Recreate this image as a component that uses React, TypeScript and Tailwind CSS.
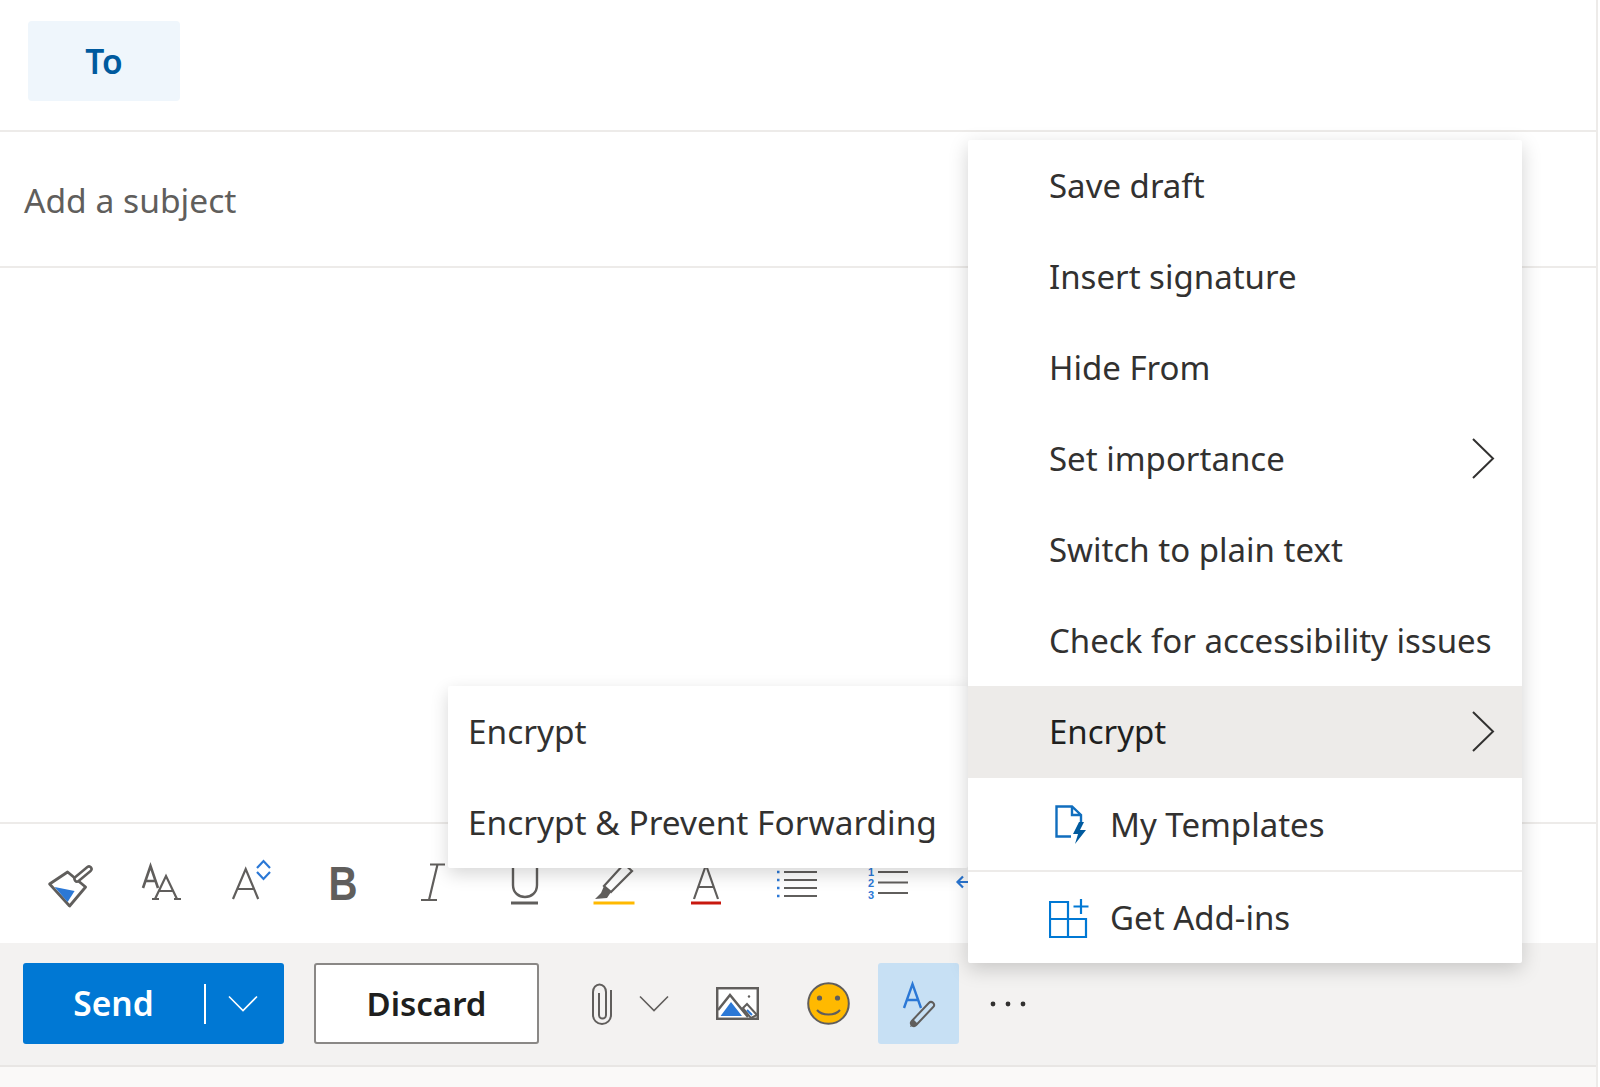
const G = "#605e5c";
const B = "#2b78d6";

function Cell({ children }: { children: React.ReactNode }) {
  return <div className="flex w-[90.7px] shrink-0 justify-center">{children}</div>;
}
function Ic({ children }: { children: React.ReactNode }) {
  return <svg width="48" height="48" viewBox="0 0 48 48" fill="none" stroke={G} strokeWidth="2.2" className="overflow-visible">{children}</svg>;
}
function Chevron({ className }: { className?: string }) {
  return (
    <svg width="30" height="17" viewBox="0 0 30 17" fill="none" className={className} stroke="currentColor" strokeWidth="1.6">
      <path d="M1 1.5 L15 15.5 L29 1.5" />
    </svg>
  );
}
function ChevronRight() {
  return (
    <svg width="23" height="41" viewBox="0 0 23 41" fill="none" stroke="#323130" strokeWidth="2" className="absolute left-[504px] top-[25px]">
      <path d="M1 1 L21 20.5 L1 40" />
    </svg>
  );
}
function Item({ label, chevron, active }: { label: string; chevron?: boolean; active?: boolean }) {
  return active ? (
    <div className="relative flex h-[92px] items-center bg-[#edebe9] pb-px pl-[81px] text-[#201f1e]">
      {label}
      <ChevronRight />
    </div>
  ) : (
    <div className="relative flex h-[91px] items-center pl-[81px]">
      {label}
      {chevron && <ChevronRight />}
    </div>
  );
}

export default function App() {
  return (
    <div className="relative h-[1087px] w-[1600px] overflow-hidden bg-white font-['Noto_Sans',sans-serif] text-[#323130]">
      <div className="flex h-[1087px] w-[1598px] flex-col border-r-2 border-[#edebe9]">
        <div className="h-[132px] shrink-0 border-b-2 border-[#edebe9] pl-[28px] pt-[21px]">
          <div className="flex h-[80px] w-[152px] items-center justify-center rounded-[4px] bg-[#eff6fc] text-[33.5px] font-semibold text-[#005a9e]">
            To
          </div>
        </div>
        <div className="flex h-[136px] shrink-0 items-center border-b-2 border-[#edebe9] pl-[24px] pt-[3px] text-[33.6px] text-[#605e5c]">
          Add a subject
        </div>
        <div className="h-[556px] shrink-0 border-b-2 border-[#edebe9]" />
        <div className="flex h-[119px] shrink-0 pl-[26px] pt-[35px]">
          <Cell>
            <Ic>
              <path d="M2.6 25 L20.6 13 L38.6 28 L22.6 47 Z" fill="white" strokeWidth="2.8" strokeLinejoin="round" />
              <path d="M7.6 28 L27.6 32 L20.6 43 Z" fill={B} stroke="none" />
              <path d="M30 20 L42 10" strokeWidth="7.5" strokeLinecap="round" />
              <path d="M30 20 L42 10" strokeWidth="2.5" stroke="white" strokeLinecap="round" />
            </Ic>
          </Cell>
          <Cell>
            <Ic>
              <path d="M5 29 L12.5 7 L20 29 M7.5 22 H17.5" strokeWidth="2.6" />
              <path d="M17 40 L28 17 L39 40 M21 32 H35 M14 40 H21 M36 40 H43" />
            </Ic>
          </Cell>
          <Cell>
            <Ic>
              <path d="M4 40 L16.7 10 L29.2 40 M8.5 30 H25" />
              <path d="M28 9 L34.5 2 L41 9 M28 13 L34.5 20 L41 13" stroke={B} />
            </Ic>
          </Cell>
          <Cell>
            <Ic>
              <text x="24" y="41" textAnchor="middle" transform="translate(4.3 0) scale(0.82 1)" fontFamily="'Liberation Sans', sans-serif" fontWeight="700" fontSize="49" fill={G} stroke="none">
                B
              </text>
            </Ic>
          </Cell>
          <Cell>
            <Ic>
              <path d="M20 5.5 H35 M27.5 5.5 L19 41 M11 41 H27" />
            </Ic>
          </Cell>
          <Cell>
            <Ic>
              <path d="M12 4 V26 C12 42 36 42 36 26 V4" strokeWidth="2.4" />
              <path d="M10 44 H37" strokeWidth="3" />
            </Ic>
          </Cell>
          <Cell>
            <Ic>
              <path d="M2.5 44 H43.5" stroke="#ffb900" strokeWidth="3" />
              <path d="M13 27 L33 5 L41 12 L20 33 Z" fill="white" />
              <path d="M13 27 L20 33 L16 39 L4 40 L10 34 Z" fill={G} stroke="none" />
            </Ic>
          </Cell>
          <Cell>
            <Ic>
              <path d="M12 40 L24 6 L36 40 M15.5 28 H32.5" />
              <path d="M9 44 H39" stroke="#c8180f" strokeWidth="3" />
            </Ic>
          </Cell>
          <Cell>
            <Ic>
              <path d="M11 13 H44 M11 21 H44 M11 29 H44 M11 37 H44" />
              <path d="M4 13 H6.5 M4 21 H6.5 M4 29 H6.5 M4 37 H6.5" stroke={B} strokeWidth="2.4" />
            </Ic>
          </Cell>
          <Cell>
            <Ic>
              <path d="M14 13 H44 M14 23.5 H44 M14 34 H44" />
              <g fontFamily="'Liberation Sans', sans-serif" fontSize="11" fontWeight="700" fill={B} stroke="none" textAnchor="middle">
                <text x="7" y="17">1</text>
                <text x="7" y="28">2</text>
                <text x="7" y="40">3</text>
              </g>
            </Ic>
          </Cell>
          <Cell>
            <Ic>
              <path d="M15 23 H4 M9 17.5 L3.5 23 L9 28.5" stroke={B} strokeWidth="2.2" />
            </Ic>
          </Cell>
        </div>
        <div className="flex h-[124px] shrink-0 items-start border-b-2 border-[#e8e6e4] bg-[#f3f2f1] pl-[23px] pt-[20px]">
          <div className="flex h-[81px] w-[261px] shrink-0 items-center rounded-[3px] bg-[#0078d4] text-white">
            <div className="flex-1 text-center text-[33.5px] font-semibold">Send</div>
            <div className="h-[40px] w-[2px] bg-white" />
            <div className="flex w-[78px] justify-center pr-[5px]">
              <Chevron />
            </div>
          </div>
          <div className="ml-[30px] flex h-[81px] w-[225px] shrink-0 items-center justify-center rounded-[3px] border-2 border-[#8a8886] bg-white text-[33px] font-semibold text-[#201f1e]">
            Discard
          </div>
          <div className="flex h-[81px] items-center">
            <svg width="20" height="42" viewBox="0 0 20 42" fill="none" stroke={G} strokeWidth="2" className="ml-[53px] shrink-0">
              <path d="M19 7 V32 A9 9 0 0 1 1 32 V9 A6.5 7.5 0 0 1 14 9 V32 A3.5 3.5 0 0 1 7 32 V10" />
            </svg>
            <Chevron className="ml-[27px] shrink-0 text-[#605e5c]" />
            <svg width="43" height="33" viewBox="0 0 43 33" fill="none" stroke={G} strokeWidth="2.5" className="ml-[47px] shrink-0">
              <rect x="1.2" y="1.2" width="40.6" height="30.6" fill="white" />
              <path d="M2 23 L14 8 L32 30" />
              <path d="M4.6 29 L15 15 L26 29 Z" fill={B} stroke="none" />
              <path d="M27 21 L31 17 L41 28 L35 31 Z" fill="white" strokeWidth="2" />
              <path d="M31 23 L36 28" stroke={B} strokeWidth="2" />
              <circle cx="33" cy="9.5" r="1.2" fill={G} stroke="none" />
            </svg>
            <svg width="43" height="43" viewBox="0 0 43 43" className="ml-[48px] shrink-0">
              <circle cx="21.5" cy="21.5" r="20.3" fill="#ffb900" stroke={G} strokeWidth="2" />
              <circle cx="12.5" cy="16" r="2.6" fill={G} />
              <circle cx="30.5" cy="16" r="2.6" fill={G} />
              <path d="M10 28 C15 34 28 34 33 28" fill="none" stroke={G} strokeWidth="2" />
            </svg>
            <div className="ml-[28px] h-[81px] w-[81px] shrink-0 rounded-[3px] bg-[#c7e0f4]">
              <svg width="81" height="81" viewBox="0 0 81 81" fill="none">
                <path d="M26 45 L34.5 21 L43 45 M29 37 H40" stroke={B} strokeWidth="2.4" />
                <path d="M36 60 L53 42" stroke={G} strokeWidth="8" strokeLinecap="round" />
                <path d="M36 60 L53 42" stroke="#c7e0f4" strokeWidth="4" strokeLinecap="round" />
                <path d="M32 64 L35 56 L40 61 Z" fill={G} />
              </svg>
            </div>
            <svg width="36" height="6" viewBox="0 0 36 6" className="ml-[31px] shrink-0">
              <circle cx="3" cy="3" r="2.4" fill="#323130" />
              <circle cx="18" cy="3" r="2.4" fill="#323130" />
              <circle cx="33" cy="3" r="2.4" fill="#323130" />
            </svg>
          </div>
        </div>
        <div className="flex-1 bg-[#faf9f8]" />
      </div>

      <div className="absolute left-[448px] top-[686px] w-[520px] rounded-[2px] bg-white text-[33.4px] shadow-[0_6px_18px_rgba(0,0,0,0.16)]">
        <div className="flex h-[91px] items-center pl-[20px]">Encrypt</div>
        <div className="flex h-[91px] items-center pl-[20px]">Encrypt &amp; Prevent Forwarding</div>
      </div>

      <div className="absolute left-[968px] top-[140px] w-[554px] rounded-[2px] bg-white text-[33px] shadow-[0_6px_20px_rgba(0,0,0,0.18)]">
        <Item label="Save draft" />
        <Item label="Insert signature" />
        <Item label="Hide From" />
        <Item label="Set importance" chevron />
        <Item label="Switch to plain text" />
        <Item label="Check for accessibility issues" />
        <Item label="Encrypt" chevron active />
        <div className="flex h-[92px] items-center pl-[87px] pt-[2px]">
          <svg width="32" height="40" viewBox="0 0 32 40" fill="none" stroke="#106ebe" strokeWidth="2.4" className="shrink-0">
            <path d="M16 31.5 H1.5 V1.5 H17 L26 10 V19 M17 1.5 V10 H26" />
            <path d="M24 17 L18 29 L23 29 L20 39 L31 25 L25 25 L29 17 Z" fill="#005a9e" stroke="none" />
          </svg>
          <span className="ml-[23px]">My Templates</span>
        </div>
        <div className="h-[2px] bg-[#edebe9]" />
        <div className="flex h-[91px] items-center pl-[81px]">
          <svg width="40" height="40" viewBox="0 0 40 40" fill="none" stroke="#0078d4" strokeWidth="2.2" className="shrink-0">
            <path d="M1 4 H19 V21 H37 V39 H1 Z M19 21 V39 M1 21 H19" />
            <path d="M32 1 V16 M24.5 8.5 H39.5" />
          </svg>
          <span className="ml-[21px]">Get Add-ins</span>
        </div>
      </div>
    </div>
  );
}
